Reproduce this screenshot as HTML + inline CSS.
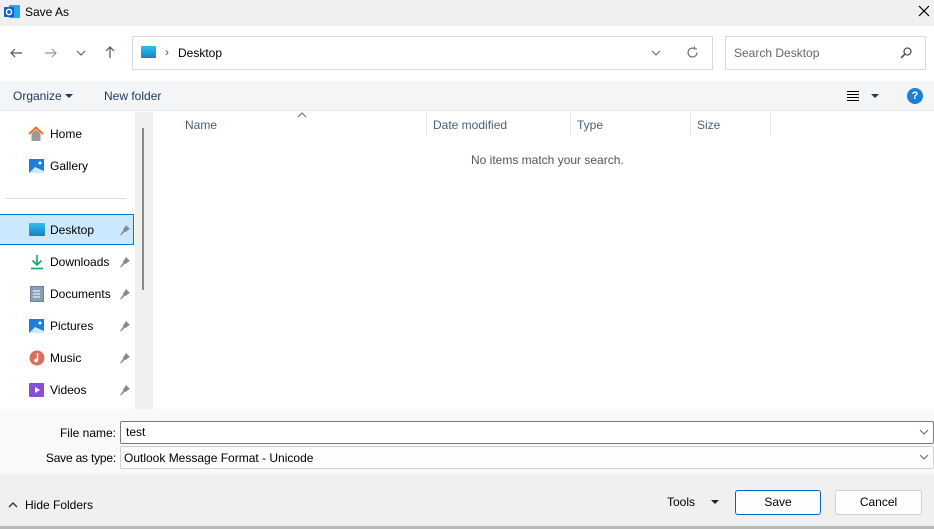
<!DOCTYPE html>
<html><head><style>
*{margin:0;padding:0;box-sizing:border-box}
body{width:934px;height:529px;position:relative;overflow:hidden;background:#fff;font-family:"Liberation Sans",sans-serif;font-size:12px;color:#000}
.a{position:absolute}
.nav{position:absolute;left:50px;font-size:12px}
.pin{position:absolute;left:119px}
.hd{position:absolute;top:118px;color:#4c607a;font-size:12px}
.sep{position:absolute;top:112px;width:1px;height:24px;background:#e5e5e5}
</style></head><body>
<div class="a" style="left:0;top:0;width:934px;height:26px;background:#f0f0f0"></div>
<div class="a" style="left:4px;top:4px;width:16px;height:16px">
<svg width="16" height="16"><rect x="5" y="1" width="11" height="13" rx="1" fill="#28a8ea"/><rect x="0" y="3" width="10" height="10" rx="1" fill="#0a64c8"/><circle cx="5" cy="8" r="2.6" fill="none" stroke="#fff" stroke-width="1.5"/></svg></div>
<div class="a" style="left:25px;top:5px">Save As</div>
<svg class="a" style="left:917px;top:4px" width="14" height="14"><path d="M2 2L12 12M12 2L2 12" stroke="#000" stroke-width="1.2"/></svg>
<svg class="a" style="left:8px;top:45px" width="16" height="16"><path d="M14 8H3M7 4L3 8L7 12" stroke="#555" stroke-width="1.2" fill="none"/></svg>
<svg class="a" style="left:43px;top:45px" width="16" height="16"><path d="M2 8H13M9 4L13 8L9 12" stroke="#999" stroke-width="1.2" fill="none"/></svg>
<svg class="a" style="left:75px;top:48px" width="12" height="10"><path d="M2 3L6 7L10 3" stroke="#555" stroke-width="1.1" fill="none"/></svg>
<svg class="a" style="left:102px;top:44px" width="16" height="16"><path d="M8 14V3M4 7L8 3L12 7" stroke="#555" stroke-width="1.2" fill="none"/></svg>
<div class="a" style="left:132px;top:36px;width:581px;height:34px;border:1px solid #d9d9d9;background:#fff"></div>
<div class="a" style="left:141px;top:46px;width:15px;height:12px;background:linear-gradient(#2ec0ee,#1a7fc4);border-radius:1px"></div>
<div class="a" style="left:165px;top:45px;color:#555">›</div>
<div class="a" style="left:178px;top:46px">Desktop</div>
<svg class="a" style="left:650px;top:48px" width="12" height="10"><path d="M2 3L6 7L10 3" stroke="#666" stroke-width="1" fill="none"/></svg>
<svg class="a" style="left:685px;top:45px" width="15" height="15"><path d="M12 7.5A4.5 4.5 0 1 1 9.5 3.5M9.5 1.5V4H12" stroke="#666" stroke-width="1.1" fill="none"/></svg>
<div class="a" style="left:725px;top:36px;width:201px;height:34px;border:1px solid #d9d9d9;background:#fff"></div>
<div class="a" style="left:734px;top:46px;color:#666">Search Desktop</div>
<svg class="a" style="left:899px;top:46px" width="14" height="14"><circle cx="8.5" cy="5.5" r="3.5" stroke="#555" stroke-width="1.3" fill="none"/><path d="M6 8L2 12" stroke="#555" stroke-width="1.6"/></svg>
<div class="a" style="left:0;top:81px;width:934px;height:30px;background:#f4f5f7;border-bottom:1px solid #e6e6e6"></div>
<div class="a" style="left:13px;top:89px;color:#1e3a60">Organize</div>
<svg class="a" style="left:64px;top:93px" width="10" height="6"><path d="M1 1H9L5 5Z" fill="#1e3a60"/></svg>
<div class="a" style="left:104px;top:89px;color:#1e3a60">New folder</div>
<svg class="a" style="left:846px;top:90px" width="14" height="12"><path d="M1 1.5H13M1 4.5H13M1 7.5H13M1 10.5H13" stroke="#000" stroke-width="1"/></svg>
<svg class="a" style="left:870px;top:93px" width="10" height="6"><path d="M1 1H9L5 5Z" fill="#1e3a60"/></svg>
<div class="a" style="left:907px;top:88px;width:16px;height:16px;border-radius:50%;background:#1a7fd8;color:#fff;font-weight:bold;font-size:11px;text-align:center;line-height:16px">?</div>
<div class="a" style="left:135px;top:112px;width:16px;height:297px;background:#f0f0f0"></div>
<div class="a" style="left:142px;top:128px;width:2px;height:162px;background:#888"></div>
<div class="a" style="left:151px;top:112px;width:2px;height:297px;background:#f0f0f0"></div>
<svg class="a" style="left:28px;top:126px" width="16" height="16"><path d="M1 8L8 1.5L15 8" stroke="#e8731a" stroke-width="2" fill="none"/><path d="M3.5 7.5V15H12.5V7.5L8 3.5Z" fill="#9a9a9a"/></svg>
<div class="nav" style="top:127px">Home</div>
<svg class="a" style="left:29px;top:158px" width="16" height="16"><rect x="0" y="1" width="15" height="14" fill="#1a7fd8"/><path d="M0 15L6 9L15 13V15Z" fill="#cfe8fb"/><circle cx="11" cy="5" r="1.5" fill="#fff"/></svg>
<div class="nav" style="top:159px">Gallery</div>
<div class="a" style="left:5px;top:198px;width:121px;height:1px;background:#ddd"></div>
<div class="a" style="left:0;top:214px;width:134px;height:31px;background:#cce8ff;border:1px solid #0078d4;border-left:none"></div>
<div class="a" style="left:29px;top:223px;width:16px;height:13px;background:linear-gradient(#2ec0ee,#1a7fc4);border-radius:1px"></div>
<div class="nav" style="top:223px">Desktop</div>
<svg class="pin" style="top:224px" width="12" height="12"><path d="M7 1L11 5L9 6L7 8L6 7.5L2 11.5L1 11L4.5 6L4 5L6 3Z" fill="#8a8a8a"/></svg>
<svg class="a" style="left:29px;top:254px" width="16" height="16"><path d="M8 1V11M3.5 6.5L8 11L12.5 6.5" stroke="#18a36a" stroke-width="1.6" fill="none"/><path d="M2 14.5H14" stroke="#18a36a" stroke-width="1.6"/></svg>
<div class="nav" style="top:255px">Downloads</div>
<svg class="pin" style="top:256px" width="12" height="12"><path d="M7 1L11 5L9 6L7 8L6 7.5L2 11.5L1 11L4.5 6L4 5L6 3Z" fill="#8a8a8a"/></svg>
<svg class="a" style="left:30px;top:286px" width="14" height="16"><rect x="0.5" y="0.5" width="13" height="15" fill="#8aa0b8" stroke="#6d8299"/><path d="M3 5H10M3 8H10M3 11H10" stroke="#fff"/></svg>
<div class="nav" style="top:287px">Documents</div>
<svg class="pin" style="top:288px" width="12" height="12"><path d="M7 1L11 5L9 6L7 8L6 7.5L2 11.5L1 11L4.5 6L4 5L6 3Z" fill="#8a8a8a"/></svg>
<svg class="a" style="left:29px;top:318px" width="16" height="16"><rect x="0" y="1" width="15" height="14" fill="#1a7fd8"/><path d="M0 15L6 9L15 13V15Z" fill="#cfe8fb"/><circle cx="11" cy="5" r="1.5" fill="#fff"/></svg>
<div class="nav" style="top:319px">Pictures</div>
<svg class="pin" style="top:320px" width="12" height="12"><path d="M7 1L11 5L9 6L7 8L6 7.5L2 11.5L1 11L4.5 6L4 5L6 3Z" fill="#8a8a8a"/></svg>
<svg class="a" style="left:29px;top:350px" width="16" height="16"><circle cx="8" cy="8" r="7.5" fill="#d8705a"/><path d="M8.5 3V10.5" stroke="#fff" stroke-width="1.4"/><circle cx="7" cy="10.5" r="1.8" fill="#fff"/></svg>
<div class="nav" style="top:351px">Music</div>
<svg class="pin" style="top:352px" width="12" height="12"><path d="M7 1L11 5L9 6L7 8L6 7.5L2 11.5L1 11L4.5 6L4 5L6 3Z" fill="#8a8a8a"/></svg>
<svg class="a" style="left:29px;top:382px" width="16" height="16"><rect x="0" y="1" width="15" height="14" rx="1" fill="#8a4fd8"/><path d="M6 5L11 8L6 11Z" fill="#fff"/></svg>
<div class="nav" style="top:383px">Videos</div>
<svg class="pin" style="top:384px" width="12" height="12"><path d="M7 1L11 5L9 6L7 8L6 7.5L2 11.5L1 11L4.5 6L4 5L6 3Z" fill="#8a8a8a"/></svg>
<div class="hd" style="left:185px">Name</div>
<svg class="a" style="left:297px;top:112px" width="10" height="6"><path d="M1 5L5 1L9 5" stroke="#666" fill="none"/></svg>
<div class="sep" style="left:426px"></div>
<div class="hd" style="left:433px">Date modified</div>
<div class="sep" style="left:570px"></div>
<div class="hd" style="left:577px">Type</div>
<div class="sep" style="left:690px"></div>
<div class="hd" style="left:697px">Size</div>
<div class="sep" style="left:770px"></div>
<div class="a" style="left:471px;top:153px;color:#555">No items match your search.</div>
<div class="a" style="left:0;top:409px;width:934px;height:65px;background:#f9f9f9"></div>
<div class="a" style="left:0;top:474px;width:934px;height:52px;background:#f0f0f0"></div>
<div class="a" style="left:0;top:526px;width:934px;height:3px;background:#b8b8b8"></div>
<div class="a" style="left:0;top:426px;width:116px;text-align:right">File name:</div>
<div class="a" style="left:120px;top:421px;width:814px;height:23px;background:#fff;border:1px solid #7a7a7a;border-radius:2px"></div>
<div class="a" style="left:126px;top:425px">test</div>
<svg class="a" style="left:919px;top:428px" width="10" height="8"><path d="M1 2L5 6L9 2" stroke="#666" fill="none"/></svg>
<div class="a" style="left:0;top:451px;width:116px;text-align:right;letter-spacing:-0.2px">Save as type:</div>
<div class="a" style="left:120px;top:446px;width:814px;height:23px;background:#fdfdfd;border:1px solid #d0d0d0;border-radius:2px"></div>
<div class="a" style="left:124px;top:451px">Outlook Message Format - Unicode</div>
<svg class="a" style="left:919px;top:453px" width="10" height="8"><path d="M1 2L5 6L9 2" stroke="#666" fill="none"/></svg>
<svg class="a" style="left:7px;top:501px" width="12" height="8"><path d="M2 6L6 2L10 6" stroke="#333" stroke-width="1.4" fill="none"/></svg>
<div class="a" style="left:25px;top:498px">Hide Folders</div>
<div class="a" style="left:667px;top:495px">Tools</div>
<svg class="a" style="left:710px;top:499px" width="10" height="6"><path d="M1 1H9L5 5Z" fill="#222"/></svg>
<div class="a" style="left:735px;top:490px;width:86px;height:25px;background:#fdfdfd;border:1px solid #0067c0;border-radius:3px;text-align:center;line-height:23px">Save</div>
<div class="a" style="left:835px;top:490px;width:87px;height:25px;background:#fdfdfd;border:1px solid #d0d0d0;border-radius:3px;text-align:center;line-height:23px">Cancel</div>
</body></html>
